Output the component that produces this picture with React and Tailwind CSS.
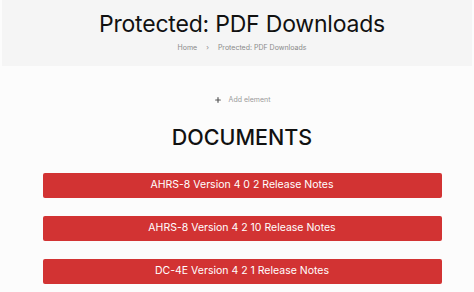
import { Plus } from 'lucide-react';

const docs = [
  'AHRS-8 Version 4 0 2 Release Notes',
  'AHRS-8 Version 4 2 10 Release Notes',
  'DC-4E Version 4 2 1 Release Notes',
];

export default function App() {
  return (
    <div
      className="w-[474px] h-[292px] overflow-hidden bg-[#fcfcfc] text-[#1a1a1a]"
      style={{ fontFamily: 'Inter, "Open Sans", sans-serif' }}
    >
      {/* Page header */}
      <div className="ml-[2px] mr-[2px] h-[66px] bg-[#f5f5f5] flex flex-col items-center pt-[10px] pl-[10px]">
        <h1 className="text-[23px] leading-[28px] font-normal tracking-[-0.2px] text-[#111]">
          Protected: PDF Downloads
        </h1>
        <div className="mt-[5px] flex items-center gap-[9px] text-[7px] text-[#8a8a8a]">
          <span>Home</span>
          <span>›</span>
          <span>Protected: PDF Downloads</span>
        </div>
      </div>

      {/* Content */}
      <div className="flex flex-col items-center pl-[10px]">
        <div className="mt-[29px] flex items-center gap-[7px] text-[7px] text-[#9a9a9a]">
          <Plus size={8} strokeWidth={3.5} className="text-[#555]" />
          <span>Add element</span>
        </div>
        <h2 className="mt-[18px] text-[21.5px] leading-[26px] font-medium text-[#111]">DOCUMENTS</h2>

        <div className="mt-[23px] w-[399px] flex flex-col gap-[18px]">
          {docs.map(d => (
            <a
              key={d}
              href="#"
              className="h-[25px] rounded-[2px] bg-[#d23333] text-white text-[10.5px] flex items-center justify-center"
            >
              {d}
            </a>
          ))}
        </div>
      </div>
    </div>
  );
}
